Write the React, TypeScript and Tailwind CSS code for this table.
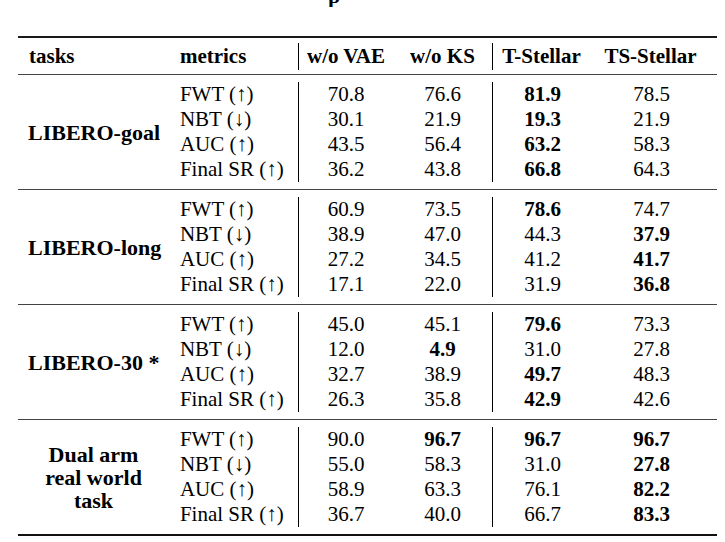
import React from "react";

type Row = { m: string; v: [string, string, string, string]; b: number[] };

const groups: { task: React.ReactNode; rows: Row[] }[] = [
  {
    task: "LIBERO-goal",
    rows: [
      { m: "FWT (↑)", v: ["70.8", "76.6", "81.9", "78.5"], b: [2] },
      { m: "NBT (↓)", v: ["30.1", "21.9", "19.3", "21.9"], b: [2] },
      { m: "AUC (↑)", v: ["43.5", "56.4", "63.2", "58.3"], b: [2] },
      { m: "Final SR (↑)", v: ["36.2", "43.8", "66.8", "64.3"], b: [2] },
    ],
  },
  {
    task: "LIBERO-long",
    rows: [
      { m: "FWT (↑)", v: ["60.9", "73.5", "78.6", "74.7"], b: [2] },
      { m: "NBT (↓)", v: ["38.9", "47.0", "44.3", "37.9"], b: [3] },
      { m: "AUC (↑)", v: ["27.2", "34.5", "41.2", "41.7"], b: [3] },
      { m: "Final SR (↑)", v: ["17.1", "22.0", "31.9", "36.8"], b: [3] },
    ],
  },
  {
    task: "LIBERO-30 *",
    rows: [
      { m: "FWT (↑)", v: ["45.0", "45.1", "79.6", "73.3"], b: [2] },
      { m: "NBT (↓)", v: ["12.0", "4.9", "31.0", "27.8"], b: [1] },
      { m: "AUC (↑)", v: ["32.7", "38.9", "49.7", "48.3"], b: [2] },
      { m: "Final SR (↑)", v: ["26.3", "35.8", "42.9", "42.6"], b: [2] },
    ],
  },
  {
    task: (
      <span className="block w-[131px] text-center leading-[23px]">
        Dual arm
        <br />
        real world
        <br />
        task
      </span>
    ),
    rows: [
      { m: "FWT (↑)", v: ["90.0", "96.7", "96.7", "96.7"], b: [1, 2, 3] },
      { m: "NBT (↓)", v: ["55.0", "58.3", "31.0", "27.8"], b: [3] },
      { m: "AUC (↑)", v: ["58.9", "63.3", "76.1", "82.2"], b: [3] },
      { m: "Final SR (↑)", v: ["36.7", "40.0", "66.7", "83.3"], b: [3] },
    ],
  },
];

// value columns: A | B  ||  C | D
const colW = ["w-[94px]", "w-[99px]", "w-[99px]", "w-[125px] pr-[6px]"];

function Col({ i, rows }: { i: number; rows: Row[] }) {
  return (
    <div className={`${colW[i]} flex flex-col text-center`}>
      {rows.map((r, k) => (
        <span key={k} className={r.b.includes(i) ? "font-bold" : ""}>
          {r.v[i]}
        </span>
      ))}
    </div>
  );
}

export default function App() {
  return (
    <div className="min-h-screen bg-white text-black font-[Liberation_Serif] text-[21px] leading-[25px]">
      <div className="h-[7px] overflow-hidden pl-[328px]">
        <span className="block -mt-[17px] font-bold text-[22px]">p</span>
      </div>

      <div className="ml-[18px] mt-[29px] w-[699px]">
        {/* header */}
        <div className="flex border-t-2 border-b-[1.5px] border-t-[#1a1a1a] border-b-[#444] font-bold text-[21px] leading-[27px]">
          <div className="w-[153px] pl-[11px] pt-[5px] pb-[4px]">tasks</div>
          <div className="w-[129px] pl-[10px] pt-[5px] pb-[4px]">metrics</div>
          <div className="flex border-l border-black mt-[5px] mb-[4px]">
            <div className="w-[94px] text-center">w/o VAE</div>
            <div className="w-[99px] text-center">w/o KS</div>
          </div>
          <div className="flex border-l border-black mt-[5px] mb-[4px]">
            <div className="w-[99px] pr-[2px] text-center">T-Stellar</div>
            <div className="w-[125px] pr-[8px] text-center">TS-Stellar</div>
          </div>
        </div>

        {groups.map((g, gi) => (
          <div
            key={gi}
            className={`flex ${
              gi === groups.length - 1 ? "border-b-2 border-[#111]" : "border-b-[1.5px] border-[#444]"
            }`}
          >
            <div className="w-[153px] pl-[10px] flex items-center font-bold text-[22px]">{g.task}</div>
            <div className="w-[129px] pl-[10px] py-[7px] flex flex-col">
              {g.rows.map((r, k) => (
                <span key={k}>{r.m}</span>
              ))}
            </div>
            <div className="flex border-l border-black my-[7px]">
              <Col i={0} rows={g.rows} />
              <Col i={1} rows={g.rows} />
            </div>
            <div className="flex border-l border-black my-[7px]">
              <Col i={2} rows={g.rows} />
              <Col i={3} rows={g.rows} />
            </div>
          </div>
        ))}
      </div>
    </div>
  );
}
